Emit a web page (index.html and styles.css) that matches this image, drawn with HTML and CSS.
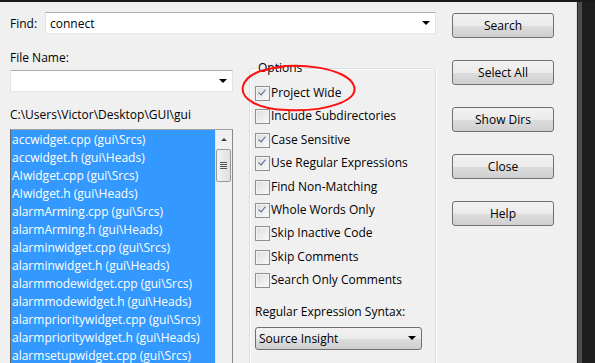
FILE: index.html
```html
<!DOCTYPE html>
<html>
	<head>
		<meta charset="UTF-8">
		<title>Search Project</title>
		<link rel="stylesheet" href="styles.css">
	</head>
	<body>
		<div class="window">
			<div class="panel">
				<div class="main">
					<div class="find-row">
						<span class="find-label">Find:</span>
						<div class="combo find-combo">
							<span class="combo-text">connect</span>
							<span class="arrow"></span>
						</div>
					</div>
					<div class="body-row">
						<div class="left-col">
							<div class="label file-label">File Name:</div>
							<div class="combo name-combo">
								<span class="combo-text"></span>
								<span class="arrow"></span>
							</div>
							<div class="label path-label">C:\Users\Victor\Desktop\GUI\gui</div>
							<div class="listbox">
								<ul class="items">
									<li>accwidget.cpp (gui\Srcs)</li>
									<li>accwidget.h (gui\Heads)</li>
									<li>AIwidget.cpp (gui\Srcs)</li>
									<li>AIwidget.h (gui\Heads)</li>
									<li>alarmArming.cpp (gui\Srcs)</li>
									<li>alarmArming.h (gui\Heads)</li>
									<li>alarminwidget.cpp (gui\Srcs)</li>
									<li>alarminwidget.h (gui\Heads)</li>
									<li>alarmmodewidget.cpp (gui\Srcs)</li>
									<li>alarmmodewidget.h (gui\Heads)</li>
									<li>alarmprioritywidget.cpp (gui\Srcs)</li>
									<li>alarmprioritywidget.h (gui\Heads)</li>
									<li>alarmsetupwidget.cpp (gui\Srcs)</li>
								</ul>
								<div class="scrollbar">
									<span class="up"></span>
									<span class="thumb"><i></i><i></i><i></i><i></i></span>
								</div>
							</div>
						</div>
						<fieldset class="options">
							<legend>Options</legend>
							<div class="check on">Project Wide</div>
							<div class="check">Include Subdirectories</div>
							<div class="check on">Case Sensitive</div>
							<div class="check on">Use Regular Expressions</div>
							<div class="check">Find Non-Matching</div>
							<div class="check on">Whole Words Only</div>
							<div class="check">Skip Inactive Code</div>
							<div class="check">Skip Comments</div>
							<div class="check">Search Only Comments</div>
							<div class="label syntax-label">Regular Expression Syntax:</div>
							<div class="combo syntax-combo">
								<span class="combo-text">Source Insight</span>
								<span class="arrow"></span>
							</div>
						</fieldset>
					</div>
				</div>
				<div class="buttons">
					<div class="btn">Search</div>
					<div class="btn">Select All</div>
					<div class="btn">Show Dirs</div>
					<div class="btn">Close</div>
					<div class="btn">Help</div>
				</div>
			</div>
			<div class="frame"></div>
			<!-- 手画的红圈 -->
			<svg class="circle" width="595" height="363" viewBox="0 0 595 363">
				<path d="M262 71 C295 60 348 68 354 86 C359 101 325 112 287 110 C258 109 240 99 243 86 C246 76 258 69 282 67" fill="none" stroke="#ff1010" stroke-width="2" stroke-linecap="round"/>
			</svg>
		</div>
	</body>
</html>
```

FILE: styles.css
```css
* {
	box-sizing: border-box;
}

body {
	margin: 0;
	font-family: "Open Sans", "Noto Sans CJK SC", sans-serif;
	font-size: 12px;
	color: #000;
	background: #1e1e1e;
}

.window {
	position: relative;
	width: 595px;
	height: 363px;
	display: flex;
	border-top: 2px solid #1a1a1a;
	overflow: hidden;
}

.panel {
	width: 577px;
	height: 361px;
	background: #f0f0f0;
	border-right: 1px solid #dcdcdc;
	display: flex;
	padding: 10px 0 0 10px;
}

.frame {
	width: 5px;
	background: #4a4c4e;
	border-left: 1px solid #2a2a2a;
}

.main {
	width: 426px;
}

.find-row {
	display: flex;
	align-items: center;
	height: 22px;
}

.find-label {
	width: 35px;
}

.combo {
	position: relative;
	display: flex;
	align-items: center;
	background: #fff;
	border: 1px solid #abadb3;
	border-color: #abadb3 #e2e3ea #e3e9ef #e2e3ea;
	padding-left: 4px;
	height: 22px;
}

.find-combo {
	width: 391px;
}

.arrow {
	position: absolute;
	right: 5px;
	top: 8px;
	width: 0;
	height: 0;
	border-left: 4px solid transparent;
	border-right: 4px solid transparent;
	border-top: 4px solid #000;
}

.body-row {
	display: flex;
	margin-top: 11px;
}

.left-col {
	width: 223px;
}

.label {
	height: 18px;
	line-height: 18px;
}

.file-label {
	margin-top: 4px;
}

.name-combo {
	margin-top: 3px;
	width: 223px;
}

.path-label {
	margin-top: 14px;
}

.listbox {
	margin-top: 5px;
	height: 240px;
	border: 1px solid #828790;
	border-top-color: #a0a0a0;
	border-left-color: #646464;
	display: flex;
}

.items {
	list-style: none;
	margin: 0;
	padding: 1px 0 0 1px;
	flex: 1;
	background: #3399ff;
	color: #fff;
}

.items li {
	height: 18px;
	line-height: 18px;
	white-space: nowrap;
}

.scrollbar {
	width: 17px;
	background: #f0f0f0;
	border-left: 1px solid #e6e6e6;
	position: relative;
}

.scrollbar .up {
	position: absolute;
	left: 5px;
	top: 8px;
	border-left: 3px solid transparent;
	border-right: 3px solid transparent;
	border-bottom: 3px solid #404040;
}

.scrollbar .thumb {
	position: absolute;
	left: 0;
	top: 19px;
	width: 15px;
	height: 33px;
	border: 1px solid #9a9a9a;
	border-radius: 2px;
	background: linear-gradient(to right, #f2f2f2, #e0e0e0);
	display: flex;
	flex-direction: column;
	justify-content: center;
	align-items: center;
	gap: 1px;
}

.scrollbar .thumb i {
	display: block;
	width: 7px;
	height: 1px;
	background: #555;
}

.options {
	margin: 15px 0 0 16px;
	width: 187px;
	height: 320px;
	padding: 8px 5px 0 5px;
	border: 1px solid #d5dfe5;
	border-radius: 3px;
	box-shadow: inset 1px 1px 0 #fff, 1px 1px 0 #fff;
}

.options legend {
	padding: 0 2px;
	margin-left: 1px;
	line-height: 16px;
}

.check {
	position: relative;
	height: 23.4px;
	line-height: 18px;
	padding-left: 16px;
	white-space: nowrap;
}

.check::before {
	content: "";
	position: absolute;
	left: 0;
	top: 2px;
	width: 13px;
	height: 13px;
	border: 1px solid #8f8f8f;
	background: linear-gradient(135deg, #dcdcdc, #fafafa);
	box-shadow: inset 0 0 0 1px #f4f4f4;
}

.check.on::after {
	content: "";
	position: absolute;
	left: 5px;
	top: 4px;
	width: 3px;
	height: 6px;
	border-right: 1.5px solid #4a5f97;
	border-bottom: 1.5px solid #4a5f97;
	transform: rotate(40deg);
}

.syntax-label {
	margin-top: 8px;
}

.syntax-combo {
	margin-top: 6px;
	width: 167px;
	height: 23px;
	border: 1px solid #707070;
	border-radius: 3px;
	background: linear-gradient(#f2f2f2 0%, #ebebeb 50%, #dddddd 51%, #cfcfcf 100%);
	padding-left: 3px;
}

.buttons {
	margin-left: 16px;
	padding-top: 1px;
	display: flex;
	flex-direction: column;
	gap: 22px;
}

.btn {
	width: 102px;
	height: 25px;
	line-height: 23px;
	text-align: center;
	border: 1px solid #707070;
	border-radius: 3px;
	background: linear-gradient(#f2f2f2 0%, #ebebeb 50%, #dddddd 51%, #cfcfcf 100%);
}

.circle {
	position: absolute;
	left: 0;
	top: -2px;
	pointer-events: none;
}
```
